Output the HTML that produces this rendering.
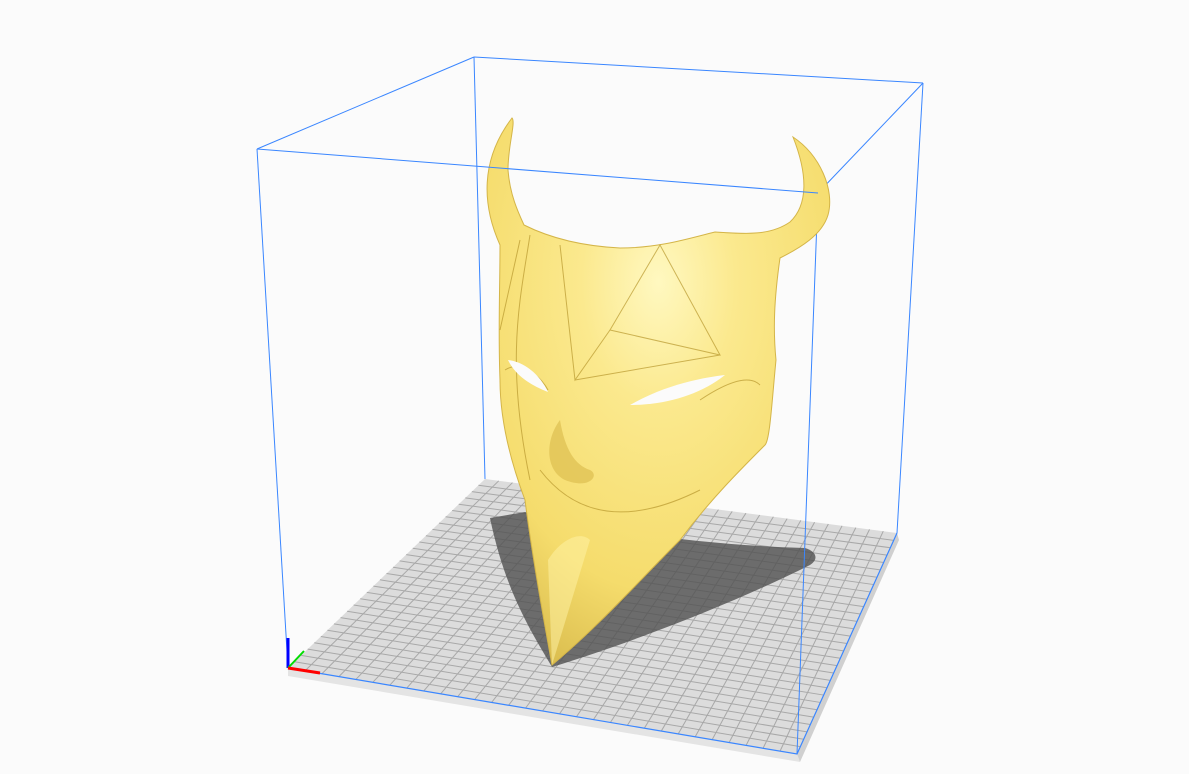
<!DOCTYPE html>
<html><head><meta charset="utf-8"><style>
html,body{margin:0;padding:0;background:#fbfbfb;}
svg{display:block}
</style></head><body>
<svg id="s" width="1189" height="774" viewBox="0 0 1189 774" xmlns="http://www.w3.org/2000/svg">
<defs>
<radialGradient id="y" cx="0.5" cy="0.3" r="0.75">
<stop offset="0" stop-color="#fff8c0"/>
<stop offset="0.3" stop-color="#fbe98e"/>
<stop offset="0.75" stop-color="#f5dc6c"/>
<stop offset="1" stop-color="#dcbf50"/>
</radialGradient>
</defs>
<polygon points="288,668 797,754 800,762 288,676" fill="#e4e4e4"/>
<polygon points="797,754 897,533 899,540 800,762" fill="#d0d0d0"/>
<polygon points="288,668 485,479 897,533 797,754" fill="#dcdcdc"/>
<g id="grid" stroke="#a8a8a8" stroke-width="1" fill="none"></g>
<path d="M490,518 L525,512 C600,530 700,545 805,548 C818,552 818,560 810,565 C740,600 640,640 552,667 C530,630 505,590 490,518 Z" fill="#505050" opacity="0.8"/>
<polyline points="288,668 797,754 897,533" fill="none" stroke="#3a86ff" stroke-width="1.2"/>
<g stroke="#3a86ff" stroke-width="1" fill="none">
<line x1="257" y1="149" x2="474" y2="57"/>
<line x1="474" y1="57" x2="923" y2="83"/>
<line x1="923" y1="83" x2="818" y2="193"/>
<line x1="474" y1="57" x2="485" y2="479"/>
<line x1="923" y1="83" x2="897" y2="533"/>
<line x1="257" y1="149" x2="288" y2="668"/>
<line x1="818" y1="193" x2="797" y2="754"/>
</g>
<!-- mask -->
<path d="M500,245 C482,205 480,160 512,118 C516,122 508,145 508,170 C510,195 518,212 524,225 C550,238 580,246 620,248 C660,248 690,238 715,232 C745,234 770,236 790,222 C808,205 808,175 793,137 C820,155 835,190 828,215 C822,235 800,248 780,258 C774,300 773,330 776,360 C772,400 770,440 765,445 C740,470 710,500 680,540 C640,580 600,625 552,665 C540,600 530,540 525,500 C510,460 500,420 500,380 C498,330 500,290 500,245 Z" fill="url(#y)" stroke="#d4b548" stroke-width="1"/>
<g fill="none" stroke="#b8982e" stroke-width="1" opacity="0.7">
<path d="M520,240 L500,330 M530,235 C520,300 505,360 530,480"/>
<path d="M660,245 L610,330 L720,355 Z"/>
<path d="M560,245 L575,380 L610,330"/>
<path d="M575,380 L720,355"/>
<path d="M540,470 C590,535 660,510 700,490"/>
<path d="M505,370 C520,360 540,375 548,390 M700,400 C730,380 750,375 760,385"/>
</g>
<path d="M508,360 C525,362 540,375 548,392 C530,385 515,375 508,360 Z" fill="#fbfbfb"/>
<path d="M630,405 C665,385 700,378 725,375 C700,395 665,405 630,405 Z" fill="#fbfbfb"/>
<path d="M560,420 C545,440 545,470 565,480 C590,490 600,475 590,470 C575,465 565,450 560,420 Z" fill="#d8b94a" opacity="0.6"/>
<path d="M552,665 L548,560 C560,540 580,530 590,540 L552,665 Z" fill="#fff3a8" opacity="0.5"/>
<line x1="257" y1="149" x2="818" y2="193" stroke="#3a86ff" stroke-width="1"/>
<line x1="288" y1="668" x2="288" y2="638" stroke="#0000ff" stroke-width="3"/>
<line x1="288" y1="668" x2="304" y2="651" stroke="#00dd00" stroke-width="2"/>
<line x1="288" y1="668" x2="320" y2="673" stroke="#ff0000" stroke-width="3"/>
</svg>
<script>
(function(){
var g=document.getElementById('grid');
var A=[288,668],B=[485,479],C=[897,533],D=[797,754];
function L(p,q,t){return [p[0]+(q[0]-p[0])*t,p[1]+(q[1]-p[1])*t];}
var n=30,s='';
for(var i=1;i<n;i++){var t=i/n;
var p=L(A,D,t),q=L(B,C,t);s+='<line x1="'+p[0]+'" y1="'+p[1]+'" x2="'+q[0]+'" y2="'+q[1]+'"/>';
p=L(A,B,t);q=L(D,C,t);s+='<line x1="'+p[0]+'" y1="'+p[1]+'" x2="'+q[0]+'" y2="'+q[1]+'"/>';}
g.innerHTML=s;
})();
</script>
</body></html>
